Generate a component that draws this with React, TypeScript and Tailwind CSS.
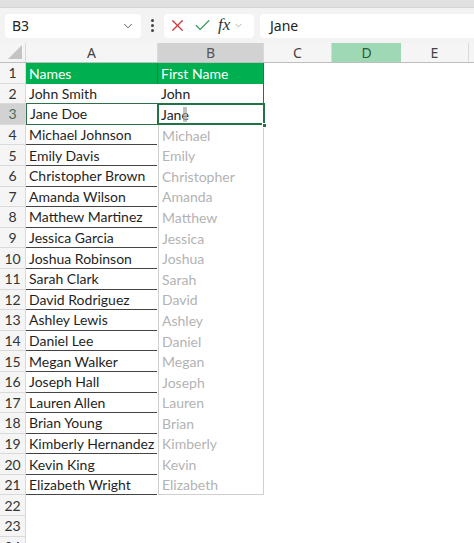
import { ChevronDown, X, Check } from "lucide-react";

const names = [
  "John Smith",
  "Jane Doe",
  "Michael Johnson",
  "Emily Davis",
  "Christopher Brown",
  "Amanda Wilson",
  "Matthew Martinez",
  "Jessica Garcia",
  "Joshua Robinson",
  "Sarah Clark",
  "David Rodriguez",
  "Ashley Lewis",
  "Daniel Lee",
  "Megan Walker",
  "Joseph Hall",
  "Lauren Allen",
  "Brian Young",
  "Kimberly Hernandez",
  "Kevin King",
  "Elizabeth Wright",
];

const cellFont = { fontFamily: "Lato, 'Noto Sans', sans-serif" };

function RowHeader({ n, active }: { n: number; active?: boolean }) {
  return (
    <div
      className={`w-[26px] shrink-0 h-full flex items-center justify-center border-r border-b border-[#d9d9d9] text-[14px] ${
        active ? "bg-[#d2d2d2] text-[#4a6b57]" : "bg-[#f5f5f5] text-[#333]"
      }`}
    >
      {n}
    </div>
  );
}

function EmptyCols() {
  return <div className="flex-1 h-full" />;
}

export default function App() {
  return (
    <div
      className="w-[474px] h-[543px] overflow-hidden bg-white flex flex-col"
      style={{ fontFamily: "'Noto Sans', 'Open Sans', sans-serif" }}
    >
      {/* top strip */}
      <div className="h-[8px] shrink-0 bg-[#e1e1e1] border-b border-[#d4d4d4]" />

      {/* formula bar */}
      <div className="h-[35px] shrink-0 bg-[#f3f3f3] flex items-center pl-[5px]">
        <div className="w-[136px] h-[24px] bg-white rounded-[4px] flex items-center justify-between pl-[7px] pr-[6px] text-[14px] text-[#222]">
          <span>B3</span>
          <ChevronDown className="w-[14px] h-[14px] text-[#555]" strokeWidth={1.6} />
        </div>
        <div className="w-[23px] flex flex-col items-center gap-[2px]">
          <span className="w-[3px] h-[3px] rounded-full bg-[#444]" />
          <span className="w-[3px] h-[3px] rounded-full bg-[#444]" />
          <span className="w-[3px] h-[3px] rounded-full bg-[#444]" />
        </div>
        <div className="w-[90px] h-[24px] bg-white rounded-[4px] flex items-center pl-[4px] gap-[6px]">
          <X className="w-[19px] h-[19px] text-[#d13438]" strokeWidth={1.5} />
          <Check className="w-[19px] h-[19px] text-[#3a9b5c]" strokeWidth={1.5} />
          <span
            className="italic text-[17px] text-[#333] leading-none -mt-[3px]"
            style={{ fontFamily: "'Liberation Serif', serif" }}
          >
            fx
          </span>
          <ChevronDown className="w-[11px] h-[11px] text-[#999] -ml-[3px]" strokeWidth={1.6} />
        </div>
        <div className="ml-[6px] flex-1 h-[24px] bg-white rounded-l-[4px] flex items-center pl-[10px] text-[14px] text-[#222]">
          Jane
        </div>
      </div>

      {/* column header */}
      <div className="h-[20px] shrink-0 flex border-b border-[#bdbdbd] bg-[#f5f5f5] text-[14px] text-[#444]">
        <div className="w-[26px] shrink-0 relative border-r border-[#d9d9d9]">
          <div
            className="absolute right-[3px] bottom-[3px] w-[14px] h-[14px] bg-[#c4c4c4]"
            style={{ clipPath: "polygon(100% 0, 100% 100%, 0 100%)" }}
          />
        </div>
        <div className="w-[132px] shrink-0 flex items-center justify-center border-r border-[#d9d9d9]">A</div>
        <div className="w-[106px] shrink-0 flex items-center justify-center border-r border-[#d9d9d9] bg-[#d2d2d2] text-[#555]">
          B
        </div>
        <div className="w-[68px] shrink-0 flex items-center justify-center border-r border-[#d9d9d9]">C</div>
        <div className="w-[69px] shrink-0 flex items-center justify-center bg-[#9fd8b5] text-[#2a5a3c]">D</div>
        <div className="w-[68px] shrink-0 flex items-center justify-center border-r border-[#d9d9d9]">E</div>
        <div className="flex-1" />
      </div>

      {/* row 1 */}
      <div className="h-[20.6px] shrink-0 flex text-[14px]" style={cellFont}>
        <RowHeader n={1} />
        <div className="w-[132px] shrink-0 bg-[#00b050] text-white flex items-center pl-[3px] border-r border-[#1f7a45]">
          Names
        </div>
        <div className="w-[106px] shrink-0 bg-[#00b050] text-white flex items-center pl-[3px] border-r border-[#1f7a45]">
          First Name
        </div>
        <EmptyCols />
      </div>

      {names.map((name, i) => {
        const row = i + 2;
        const first = name.split(" ")[0];
        const last = row === 21;
        let aCls = "border-b border-[#444]";
        if (row === 2) aCls = "border-b border-[#2f6f4a]";
        if (row === 3) aCls = "border-b border-l border-[#2f6f4a]";
        let bCell;
        if (row === 2) {
          bCell = (
            <div className="w-[106px] shrink-0 h-full flex items-center pl-[3px] border-r border-b border-[#555] text-[#222] box-border">
              John
            </div>
          );
        } else if (row === 3) {
          bCell = (
            <div className="w-[106px] shrink-0 h-full relative flex items-center pl-[3px] text-[#222]">
              <span>Jane</span>
              <span className="absolute left-[25px] top-[3px] w-[4px] h-[15px] bg-[#a8a8a8] opacity-70" />
              <div className="absolute -left-[1px] -top-[1px] -right-[1px] bottom-0 border-2 border-[#217346]" />
              <div className="absolute -right-[3px] -bottom-[3px] w-[5px] h-[5px] bg-[#217346] border border-white" />
            </div>
          );
        } else {
          bCell = (
            <div
              className={`w-[106px] shrink-0 h-full flex items-center pl-[3px] border-l border-r border-[#cfcfcf] text-[#b3b3b3] ${
                last ? "border-b" : ""
              }`}
            >
              {first}
            </div>
          );
        }
        return (
          <div key={row} className="h-[20.6px] shrink-0 flex text-[14px]" style={cellFont}>
            <RowHeader n={row} active={row === 3} />
            <div className={`w-[131px] shrink-0 h-full flex items-center pl-[3px] text-[#1f1f1f] ${aCls}`}>
              {name}
            </div>
            <div className="w-[1px] shrink-0" />
            {bCell}
            <EmptyCols />
          </div>
        );
      })}

      {[22, 23, 24].map((n) => (
        <div key={n} className="h-[20.6px] shrink-0 flex text-[14px]" style={cellFont}>
          <RowHeader n={n} />
          <EmptyCols />
        </div>
      ))}
    </div>
  );
}
